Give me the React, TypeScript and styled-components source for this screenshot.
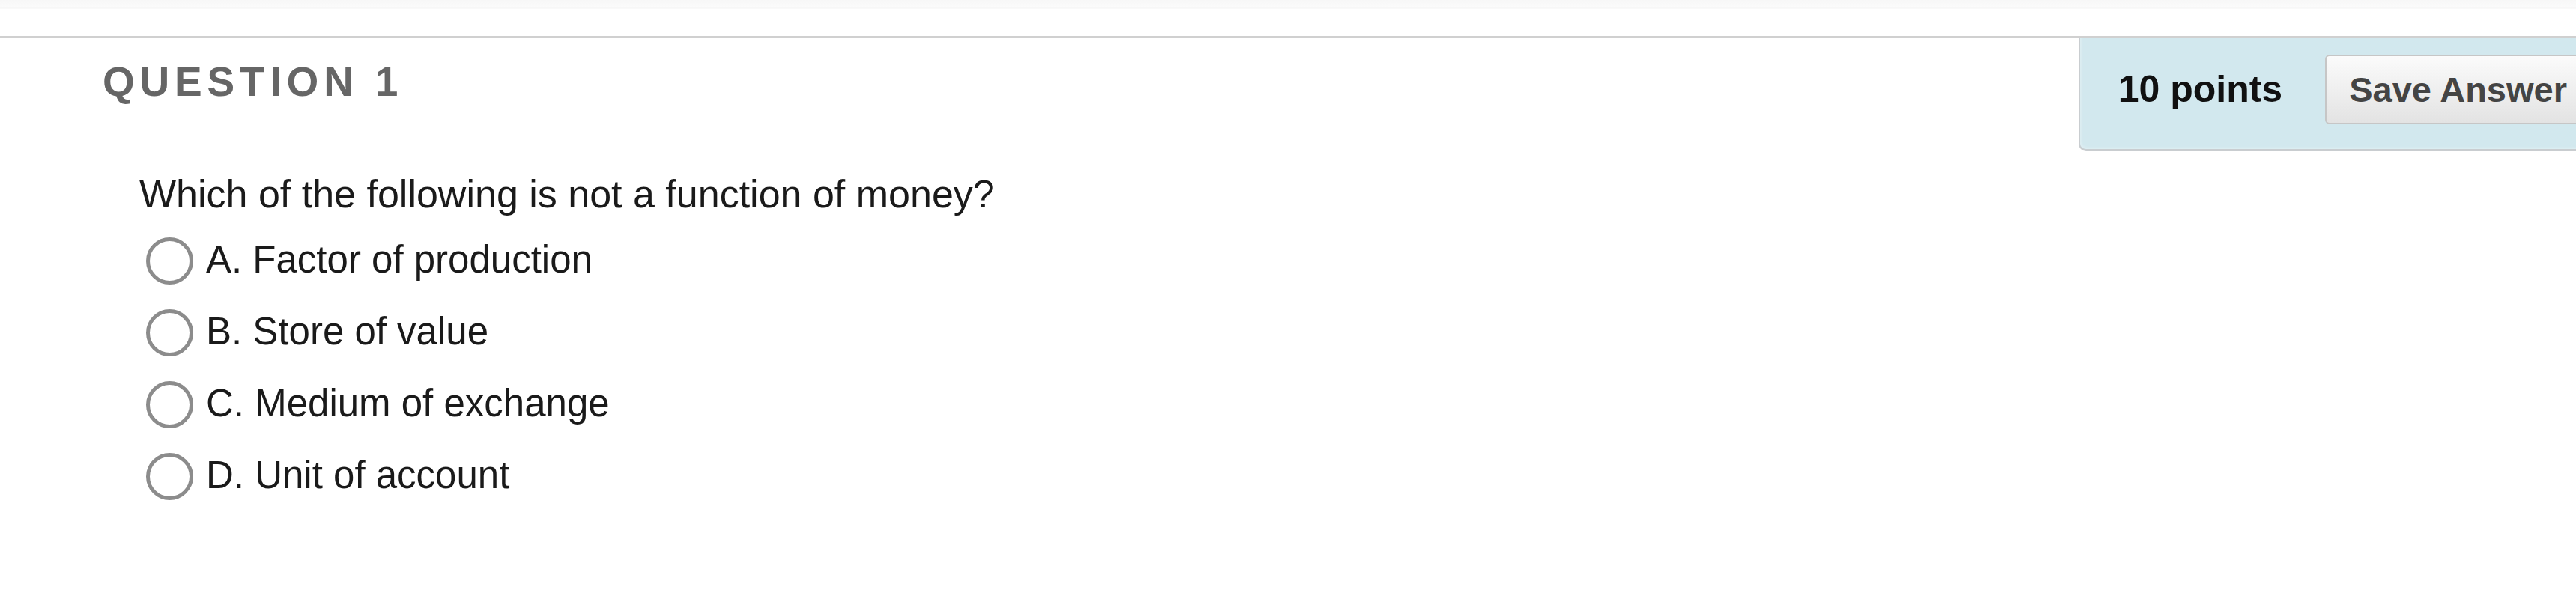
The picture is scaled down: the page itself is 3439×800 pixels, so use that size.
import React from 'react';
import styled, { createGlobalStyle } from 'styled-components';

const GlobalStyle = createGlobalStyle`
  html, body {
    margin: 0;
    padding: 0;
    background: #ffffff;
    font-family: "Liberation Sans", Arial, Helvetica, sans-serif;
    overflow: hidden;
  }
`;

const Page = styled.div`
  width: 100%;
  min-height: 800px;
  background: #ffffff;
`;

const TopStrip = styled.div`
  height: 48px;
  background: linear-gradient(to bottom, #f7f7f7 0px, #fbfbfb 10px, #f3f3f3 11px, #ffffff 12px, #ffffff 48px);
  border-bottom: 3px solid #d0d0d0;
`;

const Header = styled.header`
  display: flex;
  align-items: flex-start;
`;

const Title = styled.h2`
  flex: 1;
  min-width: 0;
  margin: 0;
  padding: 31px 0 0 137px;
  font-size: 55px;
  line-height: 55px;
  font-weight: 700;
  letter-spacing: 6.8px;
  color: #666666;
`;

const PointsPanel = styled.div`
  flex-shrink: 0;
  display: flex;
  align-items: baseline;
  gap: 57px;
  margin-right: -20px;
  padding: 22px 0 33px 51px;
  background: #d2e8ee;
  border-left: 2px solid #c9cdd0;
  border-bottom: 3px solid #c9cdd0;
  border-bottom-left-radius: 10px;
  box-shadow: inset 2px -2px 3px rgba(255, 255, 255, 0.25);
`;

const Points = styled.span`
  font-size: 50px;
  font-weight: 700;
  color: #111111;
`;

const SaveButton = styled.button`
  height: 93px;
  padding: 0 30px;
  font-family: inherit;
  font-size: 47px;
  line-height: 89px;
  font-weight: 700;
  color: #444444;
  background: linear-gradient(to bottom, #fbfbfb, #e3e3e3);
  border: 2px solid #c6c6c6;
  border-radius: 6px;
  white-space: nowrap;
  cursor: pointer;
`;

const QuestionBody = styled.section`
  padding-left: 186px;
`;

const Prompt = styled.p`
  margin: 27px 0 10px;
  font-size: 52px;
  line-height: 60px;
  color: #1a1a1a;
`;

const Options = styled.ul`
  list-style: none;
  margin: 0;
  padding: 0 0 0 9px;
`;

const OptionRow = styled.li`
  display: flex;
  align-items: center;
  gap: 17px;
  height: 96px;
`;

const Radio = styled.span`
  box-sizing: border-box;
  width: 63px;
  height: 63px;
  flex-shrink: 0;
  margin-top: 3px;
  border: 5px solid #8c8c8c;
  border-radius: 50%;
  background: #ffffff;
`;

const OptionText = styled.span`
  font-size: 51px;
  line-height: 60px;
  color: #1a1a1a;
`;

const answers = [
  'A. Factor of production',
  'B. Store of value',
  'C. Medium of exchange',
  'D. Unit of account',
];

const App: React.FC = () => {
  return (
    <Page>
      <GlobalStyle />
      <TopStrip />
      <Header>
        <Title>QUESTION 1</Title>
        <PointsPanel>
          <Points>10 points</Points>
          <SaveButton type='button'>Save Answer</SaveButton>
        </PointsPanel>
      </Header>
      <QuestionBody>
        <Prompt>Which of the following is not a function of money?</Prompt>
        <Options>
          {answers.map((answer) => (
            <OptionRow key={answer}>
              <Radio />
              <OptionText>{answer}</OptionText>
            </OptionRow>
          ))}
        </Options>
      </QuestionBody>
    </Page>
  );
};

export default App;
